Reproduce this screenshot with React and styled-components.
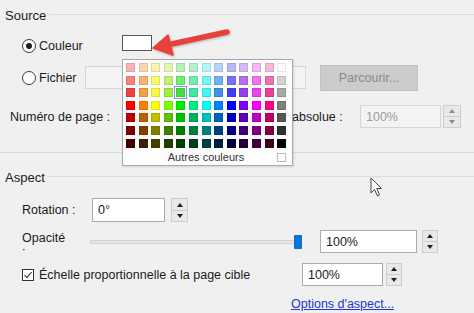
import React from "react";
import styled, { createGlobalStyle, css } from "styled-components";

const GlobalStyle = createGlobalStyle`
  html, body { margin: 0; padding: 0; background: #f0f0f0; }
  body {
    font-family: "Liberation Sans", Arial, sans-serif;
    font-size: 12.5px;
    color: #1b1b1b;
  }
`;

const Page = styled.div`
  position: relative;
  width: 474px;
  height: 313px;
  overflow: hidden;
  display: flex;
  flex-direction: column;
  background: #f0f0f0;
`;

const GroupHeader = styled.div`
  display: flex;
  align-items: center;
  gap: 3px;
  height: ${(p) => p.$h}px;
  margin-top: ${(p) => p.$mt || 0}px;
  padding-left: 5px;
  font-size: 13px;
  &::after {
    content: "";
    flex: 1;
    height: 1px;
    margin-top: -1px;
    background: #dcdcdc;
  }
`;

const Divider = styled.div`
  height: 1px;
  margin-top: ${(p) => p.$mt}px;
  background: #d9d9d9;
`;

const Row = styled.div`
  display: flex;
  align-items: center;
  height: ${(p) => p.$h}px;
  margin-top: ${(p) => p.$mt || 0}px;
  padding-left: ${(p) => p.$pl || 0}px;
`;

const Radio = styled.span`
  box-sizing: border-box;
  width: 14px;
  height: 14px;
  border-radius: 50%;
  border: 1px solid #3a3a3a;
  background: #fff;
  display: flex;
  align-items: center;
  justify-content: center;
  margin-right: 3px;
  &::after {
    content: "";
    width: 6px;
    height: 6px;
    border-radius: 50%;
    background: ${(p) => (p.$checked ? "#1f1f1f" : "transparent")};
  }
`;

const Label = styled.span`
  width: ${(p) => p.$w}px;
  flex-shrink: 0;
  white-space: nowrap;
  color: ${(p) => (p.$dim ? "#1b1b1b" : "inherit")};
`;

const WrapLabel = styled.span`
  width: ${(p) => p.$w}px;
  flex-shrink: 0;
  align-self: flex-start;
  margin-top: 4px;
  display: block;
  height: 22px;
  overflow: hidden;
  line-height: 14px;
  padding-right: ${(p) => p.$pr}px;
  box-sizing: border-box;
`;

const ColorButton = styled.span`
  box-sizing: border-box;
  width: 30px;
  height: 16px;
  align-self: flex-start;
  margin-top: 4px;
  background: #fff;
  border: 1px solid #555;
`;

const Field = styled.span`
  box-sizing: border-box;
  display: flex;
  align-items: center;
  width: ${(p) => p.$w}px;
  height: ${(p) => p.$h}px;
  margin-left: ${(p) => p.$ml || 0}px;
  padding-left: 5px;
  flex-shrink: 0;
  ${(p) =>
    p.$disabled
      ? css`
          background: #f3f3f3;
          border: 1px solid #d6d6d6;
          color: #9b9b9b;
        `
      : css`
          background: #fff;
          border: 1px solid #ababab;
          color: #1b1b1b;
        `}
`;

const Button = styled.span`
  box-sizing: border-box;
  display: flex;
  align-items: center;
  justify-content: center;
  width: 98px;
  height: 26px;
  margin-left: 14px;
  background: #cccccc;
  border: 1px solid #c2c2c2;
  color: #8a8a8a;
`;

const SpinBox = styled.span`
  box-sizing: border-box;
  display: flex;
  flex-direction: column;
  width: ${(p) => p.$w}px;
  height: ${(p) => p.$h}px;
  margin-left: ${(p) => p.$ml}px;
  border: 1px solid #cdcdcd;
  background: #e4e4e4;
  flex-shrink: 0;
`;

const SpinHalf = styled.span`
  flex: 1;
  display: flex;
  align-items: center;
  justify-content: center;
  background: #e9e9e9;
  & + & {
    border-top: 1px solid #cdcdcd;
  }
  &::after {
    content: "";
    border-left: 3.5px solid transparent;
    border-right: 3.5px solid transparent;
    ${(p) =>
      p.$down
        ? css`border-top: 4px solid ${p.$c};`
        : css`border-bottom: 4px solid ${p.$c};`}
  }
`;

function Spinner({ w, h, ml, disabled }) {
  const c = disabled ? "#8c8c8c" : "#1e1e1e";
  return (
    <SpinBox $w={w} $h={h} $ml={ml}>
      <SpinHalf $c={c} />
      <SpinHalf $c={c} $down />
    </SpinBox>
  );
}

const Slider = styled.span`
  position: relative;
  width: 212px;
  height: 16px;
  display: flex;
  align-items: center;
  flex-shrink: 0;
`;

const Track = styled.span`
  box-sizing: border-box;
  flex: 1;
  height: 4px;
  margin-right: 4px;
  background: #e6e6e6;
  border: 1px solid #d3d3d3;
`;

const Thumb = styled.span`
  position: absolute;
  right: 0;
  top: 1px;
  width: 8px;
  height: 14px;
  background: #0a74d6;
  border-radius: 1px;
`;

const CheckGroup = styled.span`
  display: flex;
  align-items: center;
  width: 280px;
  flex-shrink: 0;
  white-space: nowrap;
`;

const CheckBox = styled.span`
  box-sizing: border-box;
  width: 12px;
  height: 12px;
  border: 1px solid #333;
  background: #fff;
  margin-right: 5px;
  display: flex;
  align-items: center;
  justify-content: center;
`;

const Link = styled.span`
  color: #2434d4;
  text-decoration: underline;
`;

/* Color popup */
const Popup = styled.div`
  position: absolute;
  left: 122px;
  top: 59px;
  box-sizing: border-box;
  width: 171px;
  height: 107px;
  background: #fdfdfd;
  border: 1px solid #a9a9a9;
  box-shadow: 1px 1px 2px rgba(0, 0, 0, 0.12);
  padding: 3px 0 0 3px;
  display: flex;
  flex-direction: column;
`;

const Grid = styled.div`
  display: grid;
  grid-template-columns: repeat(13, 9px);
  grid-auto-rows: 9px;
  column-gap: 3.6px;
  row-gap: 3.6px;
`;

const Swatch = styled.span`
  background: ${(p) => p.$c};
  box-shadow: inset 0 0 0 1px rgba(0, 0, 0, 0.1);
  ${(p) =>
    p.$sel &&
    css`
      outline: 1px solid #8d8ff0;
      outline-offset: 1px;
    `}
`;

const PopupFooter = styled.div`
  display: grid;
  grid-template-columns: 1fr auto 1fr;
  align-items: center;
  height: 16px;
  margin-top: 2px;
  padding-right: 6px;
  font-size: 11px;
  color: #333;
`;

const MoreBox = styled.span`
  justify-self: end;
  box-sizing: border-box;
  width: 9px;
  height: 9px;
  background: #fff;
  border: 1px solid #b9b9b9;
`;

const ArrowSvg = styled.svg`
  position: absolute;
  left: 150px;
  top: 24px;
  filter: drop-shadow(1px 1px 1px rgba(0, 0, 0, 0.25));
`;

const CursorSvg = styled.svg`
  position: absolute;
  left: 370px;
  top: 177px;
`;

const PALETTE = [
  ["#f8b4b4", "#fad7b2", "#f9f3ae", "#e3f5b0", "#b7f3b7", "#b2f0d2", "#b6f6f6", "#b6d5f6", "#b8b8f6", "#d7b8f6", "#f6b8f6", "#f6b8d7", "#ffffff"],
  ["#fa8080", "#fab070", "#fafa70", "#c0f070", "#70ee70", "#70eeb0", "#70f6f6", "#70b0f6", "#7474f0", "#b070f0", "#f070f0", "#f070b0", "#d2d2d2"],
  ["#f04040", "#f8a040", "#f8f840", "#a0f040", "#40e040", "#40e8a0", "#40f6f6", "#4090f0", "#4040f0", "#9040f0", "#f040f0", "#f04090", "#a8a8a8"],
  ["#ff0000", "#ff8000", "#ffff00", "#80ff00", "#00ee00", "#00ee80", "#00ffff", "#0080ff", "#0000ff", "#8000ff", "#ff00ff", "#ff0080", "#808078"],
  ["#c00000", "#c06000", "#c0c000", "#60c000", "#00c000", "#00b060", "#00c0c0", "#0060c0", "#0000c0", "#6000c0", "#c000c0", "#c00060", "#585850"],
  ["#800000", "#804000", "#808000", "#408000", "#008000", "#008040", "#008080", "#004080", "#000080", "#400080", "#800080", "#800040", "#303030"],
  ["#400000", "#402000", "#404000", "#204000", "#004000", "#004020", "#004040", "#002040", "#000040", "#200040", "#400040", "#400020", "#000000"],
];

export default function App() {
  return (
    <>
      <GlobalStyle />
      <Page>
        <GroupHeader $h={31}>Source</GroupHeader>

        <Row $h={31} $pl={22}>
          <Radio $checked />
          <Label $w={83}>Couleur</Label>
          <ColorButton />
        </Row>

        <Row $h={32} $pl={22}>
          <Radio />
          <Label $w={46}>Fichier</Label>
          <Field $w={221} $h={23} $disabled />
          <Button>Parcourir...</Button>
        </Row>

        <Row $h={46} $pl={10}>
          <Label $w={282}>Numéro de page :</Label>
          <Label $w={68}>absolue :</Label>
          <Field $w={81} $h={23} $disabled>100%</Field>
          <Spinner w={18} h={23} ml={2} disabled />
        </Row>

        <Divider $mt={13} />

        <GroupHeader $h={24} $mt={12}>Aspect</GroupHeader>

        <Row $h={28} $mt={7} $pl={22}>
          <Label $w={70}>Rotation :</Label>
          <Field $w={73} $h={24}>0°</Field>
          <Spinner w={17} h={24} ml={6} />
        </Row>

        <Row $h={29} $mt={3} $pl={22}>
          <WrapLabel $w={68} $pr={18}>Opacité :</WrapLabel>
          <Slider>
            <Track />
            <Thumb />
          </Slider>
          <Field $w={97} $h={23} $ml={18}>100%</Field>
          <Spinner w={16} h={23} ml={5} />
        </Row>

        <Row $h={29} $mt={4} $pl={22}>
          <CheckGroup>
            <CheckBox>
              <svg width="10" height="10" viewBox="0 0 10 10">
                <path d="M1.5 5.2 L4 7.6 L8.6 2" fill="none" stroke="#333" strokeWidth="1.1" />
              </svg>
            </CheckBox>
            Échelle proportionnelle à la page cible
          </CheckGroup>
          <Field $w={81} $h={23}>100%</Field>
          <Spinner w={16} h={23} ml={3} />
        </Row>

        <Row $h={18} $mt={6} $pl={291}>
          <Link>Options d'aspect...</Link>
        </Row>

        <Popup>
          <Grid>
            {PALETTE.flatMap((row, r) =>
              row.map((c, i) => <Swatch key={`${r}-${i}`} $c={c} $sel={r === 2 && i === 4} />)
            )}
          </Grid>
          <PopupFooter>
            <span />
            <span>Autres couleurs</span>
            <MoreBox />
          </PopupFooter>
        </Popup>

        <ArrowSvg width="84" height="36" viewBox="0 0 84 36">
          <line x1="17" y1="21" x2="77" y2="8" stroke="#e8403a" strokeWidth="5.5" strokeLinecap="round" />
          <polygon points="3,24 18,11 23,31" fill="#e8403a" stroke="#e8403a" strokeWidth="1.5" strokeLinejoin="round" />
        </ArrowSvg>

        <CursorSvg width="14" height="21" viewBox="0 0 14 21">
          <path d="M1 1 L1 16 L4.5 12.5 L7.5 19 L9.5 18 L6.8 11.5 L11.5 11.5 Z" fill="#fff" stroke="#444" strokeWidth="1" strokeLinejoin="round" />
        </CursorSvg>
      </Page>
    </>
  );
}
